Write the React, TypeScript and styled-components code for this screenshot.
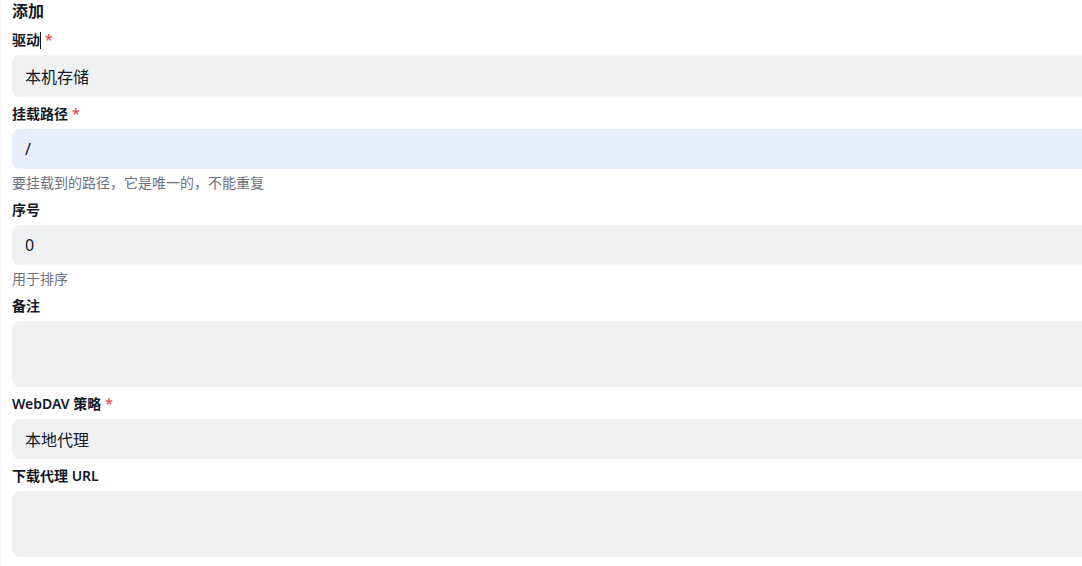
import React from "react";
import styled, { createGlobalStyle } from "styled-components";

const GlobalStyle = createGlobalStyle`
  html, body {
    margin: 0;
    padding: 0;
    background: #ffffff;
    overflow: hidden;
  }
  body {
    font-family: "Noto Sans", "Noto Sans CJK SC", sans-serif;
    color: #111827;
  }
  * { box-sizing: border-box; }
`;

const Page = styled.div`
  width: 1082px;
  height: 566px;
  overflow: hidden;
  border-left: 1px solid #f4f4f5;
  padding-left: 11px;
`;

const Form = styled.form`
  width: 1100px;
  display: flex;
  flex-direction: column;
`;

const Title = styled.h2`
  margin: 0 0 8px;
  font-size: 16px;
  line-height: 22px;
  font-weight: 700;
  color: #111827;
`;

const Field = styled.div`
  display: flex;
  flex-direction: column;
  margin-bottom: 7px;
`;

const Label = styled.label`
  display: flex;
  align-items: center;
  font-size: 14px;
  line-height: 20px;
  font-weight: 600;
  color: #111827;
  margin-bottom: 5px;
`;

const Required = styled.span`
  color: #ef4444;
  margin-left: 4px;
  font-weight: 500;
`;

const Caret = styled.span`
  display: inline-block;
  width: 1px;
  height: 17px;
  background: #111827;
`;

const Input = styled.div<{ $focused?: boolean; $tall?: boolean; $h?: number }>`
  height: ${(p) => p.$h ?? 40}px;
  border-radius: 8px;
  background: ${(p) => (p.$focused ? "#e8effc" : "#f0f1f3")};
  padding: 0 13px;
  display: flex;
  align-items: ${(p) => (p.$tall ? "flex-start" : "center")};
  font-size: 16px;
  color: #111827;
`;

const Help = styled.div`
  font-size: 14px;
  line-height: 20px;
  color: #6b7280;
  margin-top: 4px;
`;

export default function App() {
  return (
    <>
      <GlobalStyle />
      <Page>
        <Form>
          <Title>添加</Title>
          <Field>
            <Label>
              驱动
              <Caret />
              <Required>*</Required>
            </Label>
            <Input $h={42}>本机存储</Input>
          </Field>
          <Field>
            <Label>
              挂载路径<Required>*</Required>
            </Label>
            <Input $focused>/</Input>
            <Help>要挂载到的路径，它是唯一的，不能重复</Help>
          </Field>
          <Field>
            <Label>序号</Label>
            <Input>0</Input>
            <Help>用于排序</Help>
          </Field>
          <Field>
            <Label>备注</Label>
            <Input $tall $h={66} />
          </Field>
          <Field>
            <Label>
              WebDAV 策略<Required>*</Required>
            </Label>
            <Input>本地代理</Input>
          </Field>
          <Field>
            <Label>下载代理 URL</Label>
            <Input $tall $h={66} />
          </Field>
        </Form>
      </Page>
    </>
  );
}
